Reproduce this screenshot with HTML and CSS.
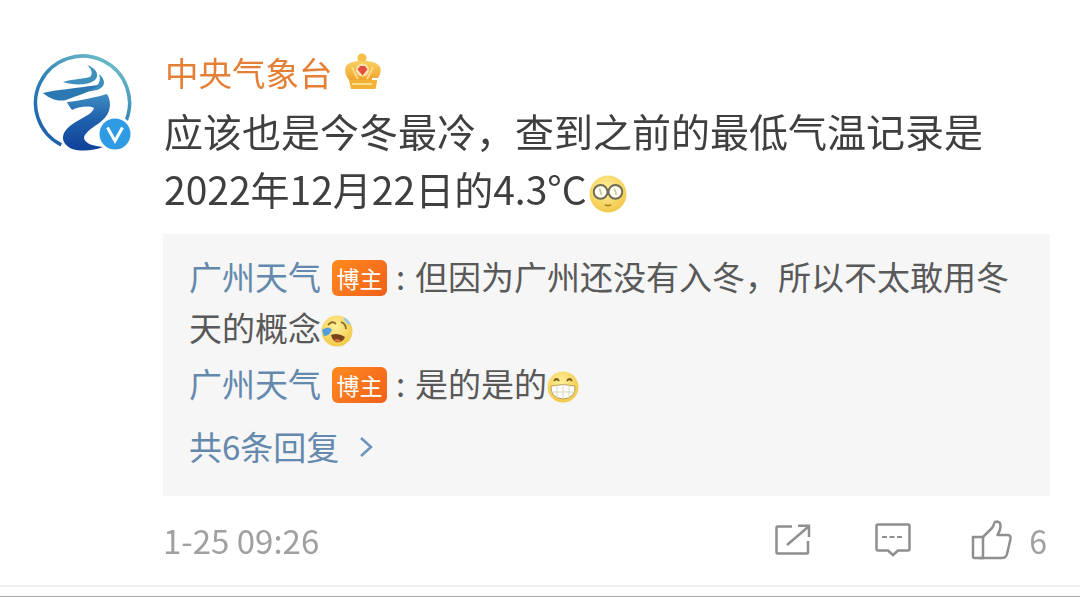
FILE: index.html
```html
<!DOCTYPE html>
<html lang="zh-CN">
<head>
<meta charset="utf-8">
<title>评论</title>
<link rel="stylesheet" href="styles.css">
</head>
<body>
<svg width="0" height="0" class="defs">
  <defs>
    <linearGradient id="ring" x1="0.8" y1="0" x2="0.2" y2="1">
      <stop offset="0" stop-color="#6fc0c8"/><stop offset="0.5" stop-color="#2f80b8"/><stop offset="1" stop-color="#1d5fa8"/>
    </linearGradient>
    <linearGradient id="ink" x1="0.5" y1="0" x2="0.5" y2="1">
      <stop offset="0" stop-color="#3f8dc0"/><stop offset="0.45" stop-color="#1f62ac"/><stop offset="1" stop-color="#0f3f9a"/>
    </linearGradient>
    <radialGradient id="yellow" cx="0.45" cy="0.35" r="0.75">
      <stop offset="0" stop-color="#fff09a"/><stop offset="1" stop-color="#f0c23c"/>
    </radialGradient>
    <linearGradient id="gold" x1="0" y1="0" x2="0" y2="1">
      <stop offset="0" stop-color="#f9cf62"/><stop offset="1" stop-color="#eea32a"/>
    </linearGradient>
  </defs>
</svg>
<main class="comment">
  <div class="avatar-col">
    <svg class="avatar" viewBox="33 53 100 100">
      <path d="M61.200 144.900A47 47 0 1 1 125.100 122.900" fill="none" stroke="url(#ring)" stroke-width="3.500"/>
      <path d="M63 82C72 79 82 79 90 77C93 74 92 69 87 65C96 68 100 75 95 80C88 86 72 85 63 82Z" fill="#3f8fbd"/>
      <path d="M99 74C106 80 106 87 97 90L86 92C92 88 103 86 99 74Z" fill="#3c8cbc"/>
      <path d="M43 93C55 90 70 89 98 85C92 92 78 95 66 100C58 102 50 99 43 93Z" fill="#2b78b2"/>
      <path d="M67 102C80 101 96 97 107 94C113 104 110 116 98 124C90 129 84 134 84 138C85 144 94 146 103 147C94 151 78 152 70 148C62 143 61 136 66 130C74 120 92 116 94 108C88 105 78 107 72 110C70 107 68 105 67 102Z" fill="url(#ink)"/>
      <circle cx="115" cy="134" r="18.500" fill="#fff"/>
      <circle cx="115" cy="134" r="15.500" fill="#2f9be4"/>
      <path d="M107.500 127.500L115 141L122.500 127.500" fill="none" stroke="#fff" stroke-width="3"/>
    </svg>
  </div>
  <div class="main">
    <div class="name-row">
      <span class="name">中央气象台</span>
      <svg class="crown" viewBox="0 0 40 40">
        <circle cx="19" cy="6" r="4.500" fill="#f5c04a"/>
        <path d="M3 14C8 9 14 9 19 9C25 9 33 9 37 15C39 20 36 25 33 29H7C3 25 1 19 3 14Z" fill="url(#gold)"/>
        <path d="M9 15C11 20 13 24 15 27M30 15C28 20 26 24 24 27" stroke="#fbdc8c" stroke-width="2" fill="none"/>
        <circle cx="19.500" cy="18" r="6.500" fill="#fde3b0"/>
        <path d="M19.500 23.500L14.500 17.500L17 14H22L24.500 17.500Z" fill="#e4523c"/>
        <path d="M6 28H34L33 37H8Z" fill="#f2b235"/>
        <path d="M9 32H29" stroke="#fce9a8" stroke-width="1.500"/>
        <path d="M29 27H37L33 38" stroke="#fff" stroke-width="2" fill="none"/>
      </svg>
    </div>
    <p class="text">应该也是今冬最冷，查到之前的最低气温记录是<br>2022年12月22日的4.3°C<svg class="emoji-big" viewBox="0 0 36 36">
        <circle cx="18" cy="18" r="17.500" fill="url(#yellow)"/>
        <circle cx="11" cy="16" r="6.500" fill="#fdfdf0" stroke="#6d6a58" stroke-width="1.800"/>
        <circle cx="25" cy="16" r="6.500" fill="#fdfdf0" stroke="#6d6a58" stroke-width="1.800"/>
        <path d="M10 13L12 19M24 13L26 19" stroke="#c8c4a0" stroke-width="1.500"/>
        <path d="M15 28Q18 30 21 28" stroke="#a8852a" stroke-width="1.500" fill="none"/>
      </svg></p>
    <section class="replies">
      <p class="reply first"><span class="who">广州天气</span><span class="tag">博主</span><span class="colon">:</span>但因为广州还没有入冬，所以不太敢用冬<br>天的概念<svg class="emoji" viewBox="0 0 32 32">
          <circle cx="16" cy="16" r="15.500" fill="url(#yellow)"/>
          <path d="M7 10Q11 5 15 9M20 7Q25 9 25 14" stroke="#8a6a2a" stroke-width="1.800" fill="none"/>
          <path d="M10 20Q17 17 24 22Q22 28 15 27Q11 25 10 20Z" fill="#7a4420"/>
          <path d="M13 25Q17 23 20 26Q16 28 13 25Z" fill="#ef7f3c"/>
          <path d="M1 15Q8 10 11 15Q8 21 3 21Z" fill="#4f9fe0"/>
          <path d="M22 2Q28 4 30 10Q25 10 22 2Z" fill="#9cc9e8"/>
        </svg></p>
      <p class="reply"><span class="who">广州天气</span><span class="tag">博主</span><span class="colon">:</span>是的是的<svg class="emoji" viewBox="0 0 32 32">
          <circle cx="16" cy="16" r="15.500" fill="url(#yellow)"/>
          <path d="M7 10Q9.500 6 12 10M20 10Q22.500 6 25 10" stroke="#7a5a20" stroke-width="1.800" fill="none"/>
          <path d="M4 15Q16 12 28 15Q29 27 16 28Q3 27 4 15Z" fill="#fff" stroke="#b89a50" stroke-width="1"/>
          <path d="M4 21H28M10 14V27M16 13V28M22 14V27" stroke="#d8d2bc" stroke-width="1"/>
        </svg></p>
      <div class="more"><span>共6条回复</span><svg class="chev" viewBox="0 0 14 22"><path d="M2 2L12 11L2 20" fill="none" stroke="#6d94bb" stroke-width="2.500"/></svg></div>
    </section>
    <footer class="meta">
      <time class="date">1-25 09:26</time>
      <div class="actions">
        <svg class="act share" viewBox="0 0 36 32"><path d="M17 2.500H2.500Q1.500 2.500 1.500 3.500V28.500Q1.500 29.500 2.500 29.500H32Q33 29.500 33 28.500V17" fill="none" stroke="#8f8f8f" stroke-width="2.500"/><path d="M12 21L33 3M23 1.800H34V13" fill="none" stroke="#8f8f8f" stroke-width="2.500"/></svg>
        <svg class="act talk" viewBox="0 0 36 34"><path d="M3 1.500H33Q34.500 1.500 34.500 3V26Q34.500 27.500 33 27.500H23L18 32L13 27.500H3Q1.500 27.500 1.500 26V3Q1.500 1.500 3 1.500Z" fill="none" stroke="#8f8f8f" stroke-width="2.500"/><path d="M7 14H29" stroke="#8f8f8f" stroke-width="2.200" stroke-dasharray="5 2.500"/></svg>
        <svg class="act like" viewBox="0 0 42 40"><path d="M2 17H12V38H3.500Q2 38 2 36.500Z" fill="none" stroke="#8f8f8f" stroke-width="2.500"/><path d="M12 17L21 8Q23 5 23.500 2.500Q24 1.500 26 1.500Q30 2 29.500 7Q29 11 26.500 15H37Q40 15 39.500 19L36 34Q35 38 31 38H8" fill="none" stroke="#8f8f8f" stroke-width="2.500" stroke-linejoin="round"/></svg>
        <span class="count">6</span>
      </div>
    </footer>
  </div>
</main>
<div class="rule"></div>
<div class="edge"></div>
</body>
</html>
```
FILE: styles.css
```css
* { box-sizing: border-box; }
html, body { margin: 0; padding: 0; }
body {
  width: 1080px;
  height: 597px;
  overflow: hidden;
  background: #fff;
  font-family: "Noto Sans CJK SC", "Noto Sans", sans-serif;
  display: flex;
  flex-direction: column;
}
.defs { position: absolute; }
.comment {
  display: flex;
  height: 585px;
  padding: 53px 30px 0 33px;
  filter: blur(0.6px);
}
.avatar-col { width: 131px; flex: none; }
.avatar { display: block; width: 100px; height: 100px; }
.main { flex: 1; min-width: 0; display: flex; flex-direction: column; }
.name-row { display: flex; align-items: center; height: 38px; padding-left: 1px; gap: 10px; }
.name { font-size: 33.500px; line-height: 38px; color: #e57f35; }
.crown { width: 40px; height: 40px; flex: none; }
.text {
  margin: 10px 0 0;
  font-size: 39px;
  line-height: 58px;
  color: #3f3f3f;
  white-space: nowrap;
}
.emoji-big { width: 38px; height: 38px; vertical-align: -8px; margin-left: 2px; }
.replies {
  margin-top: 17px;
  margin-left: -1px;
  width: 887px;
  height: 263px;
  background: #f6f6f6;
  padding: 17px 26px 0;
  color: #595959;
}
.reply { margin: 0; font-size: 33px; line-height: 51px; white-space: nowrap; }
.reply.first { margin-bottom: 5px; }
.who { color: #6489ad; }
.tag {
  display: inline-block;
  width: 55px;
  height: 36px;
  margin: 0 9px 0 11px;
  border-radius: 6px;
  background: linear-gradient(135deg, #ff8a1e, #f0601a);
  color: #fff;
  font-size: 23px;
  line-height: 36px;
  text-align: center;
  vertical-align: 2px;
}
.colon { display: inline-block; width: 19px; }
.emoji { width: 32px; height: 32px; vertical-align: -6px; }
.more {
  display: flex;
  align-items: center;
  gap: 20px;
  margin-top: 12px;
  font-size: 33px;
  line-height: 51px;
  color: #6489ad;
}
.chev { width: 14px; height: 22px; }
.meta {
  display: flex;
  justify-content: space-between;
  align-items: center;
  height: 90px;
  margin-right: 3px;
}
.date { font-size: 33px; color: #a0a0a0; margin-left: -1px; }
.actions { display: flex; align-items: center; }
.act { display: block; flex: none; }
.share { width: 36px; height: 32px; }
.talk { width: 36px; height: 34px; margin-left: 64px; }
.like { width: 42px; height: 40px; margin-left: 60px; }
.count { font-size: 32px; color: #a0a0a0; margin-left: 16px; }
.rule { height: 2px; background: #efefef; flex: none; }
.edge { height: 1px; margin-top: 9px; background: #a6a6a6; flex: none; }
```
